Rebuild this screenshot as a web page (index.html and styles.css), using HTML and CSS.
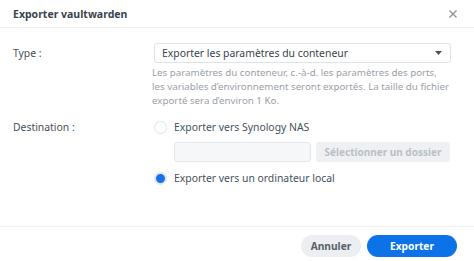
FILE: index.html
```html
<!DOCTYPE html>
<html lang="fr">
<head>
<meta charset="utf-8">
<link rel="stylesheet" href="styles.css">
</head>
<body>
<div class="dialog">
  <div class="header">
    <span class="title">Exporter vaultwarden</span>
    <svg class="close" width="10" height="10" viewBox="0 0 10 10"><path d="M1.5 1.5 L8.5 8.5 M8.5 1.5 L1.5 8.5" stroke="#8a9097" stroke-width="1.3" fill="none"/></svg>
  </div>
  <div class="content">
    <div class="row type-row">
      <div class="label">Type :</div>
      <div class="field">
        <div class="select">
          <span>Exporter les paramètres du conteneur</span>
          <svg class="caret" width="7" height="4" viewBox="0 0 7 4"><path d="M0 0 L7 0 L3.5 4 Z" fill="#4a525a"/></svg>
        </div>
        <p class="desc">Les paramètres du conteneur, c.-à-d. les paramètres des ports, les variables d’environnement seront exportés. La taille du fichier exporté sera d’environ 1 Ko.</p>
      </div>
    </div>
    <div class="row dest-row">
      <div class="label">Destination :</div>
      <div class="field">
        <label class="radio-line"><span class="radio"></span><span>Exporter vers Synology NAS</span></label>
        <div class="path-line">
          <div class="input"></div>
          <div class="btn-disabled">Sélectionner un dossier</div>
        </div>
        <label class="radio-line"><span class="radio checked"></span><span>Exporter vers un ordinateur local</span></label>
      </div>
    </div>
  </div>
  <div class="footer">
    <button class="btn cancel">Annuler</button>
    <button class="btn primary">Exporter</button>
  </div>
</div>
</body>
</html>
```

FILE: styles.css
```css
html, body {
  margin: 0;
  padding: 0;
  background: #fff;
}
body {
  font-family: "Noto Sans", "DejaVu Sans", sans-serif;
  font-size: 10.4px;
  color: #46505a;
}
.dialog {
  width: 474px;
  height: 261px;
  display: flex;
  flex-direction: column;
}
.header {
  height: 27px;
  border-bottom: 1px solid #eef0f2;
  display: flex;
  align-items: center;
  justify-content: space-between;
  padding: 0 16px 0 13px;
}
.title {
  font-weight: bold;
  color: #3a434c;
  font-size: 10.5px;
}
.close {
  display: block;
}
.content {
  flex: 1;
  padding: 15px 0 0 13px;
}
.row {
  display: grid;
  grid-template-columns: 141px 297px;
}
.label {
  line-height: 20px;
  color: #46505a;
}
.select {
  height: 18px;
  border: 1px solid #dfe2e6;
  border-radius: 3px;
  display: flex;
  align-items: center;
  justify-content: space-between;
  padding: 0 8px 0 7px;
  color: #38424c;
}
.caret {
  display: block;
}
.desc {
  margin: 3px 0 0 -2px;
  font-size: 9.75px;
  line-height: 14px;
  color: #9aa1a8;
}
.dest-row {
  margin-top: 12px;
}
.dest-row .label {
  line-height: 14px;
}
.radio-line {
  display: flex;
  align-items: center;
  height: 14px;
  gap: 7px;
  color: #46505a;
}
.radio {
  width: 13px;
  height: 13px;
  border: 1px solid #dfe2e6;
  border-radius: 50%;
  box-sizing: border-box;
  flex: none;
  background: #fff;
}
.radio.checked {
  border: 2.5px solid #dde9f9;
  background: #1672e6;
}
.path-line {
  display: flex;
  gap: 5px;
  margin: 8px 0 9px 20px;
  height: 20px;
}
.input {
  width: 135px;
  height: 18px;
  border: 1px solid #e3e6ea;
  border-radius: 3px;
  background: #f6f7f9;
}
.btn-disabled {
  width: 134px;
  height: 20px;
  border-radius: 3px;
  background: #eef0f3;
  color: #b9c0c8;
  display: flex;
  align-items: center;
  justify-content: center;
  font-size: 10px;
  font-weight: bold;
}
.footer {
  height: 35px;
  border-top: 1px solid #eef0f2;
  display: flex;
  justify-content: flex-end;
  align-items: flex-start;
  padding: 8px 17px 0 0;
  gap: 6px;
  box-sizing: border-box;
}
.btn {
  height: 22px;
  border: none;
  border-radius: 11px;
  font-family: "Noto Sans", "DejaVu Sans", sans-serif;
  font-size: 10.2px;
  font-weight: bold;
  padding: 0;
}
.cancel {
  width: 60px;
  background: #eceef2;
  color: #56606a;
}
.primary {
  width: 90px;
  background: #0b72e7;
  color: #fff;
}
```
